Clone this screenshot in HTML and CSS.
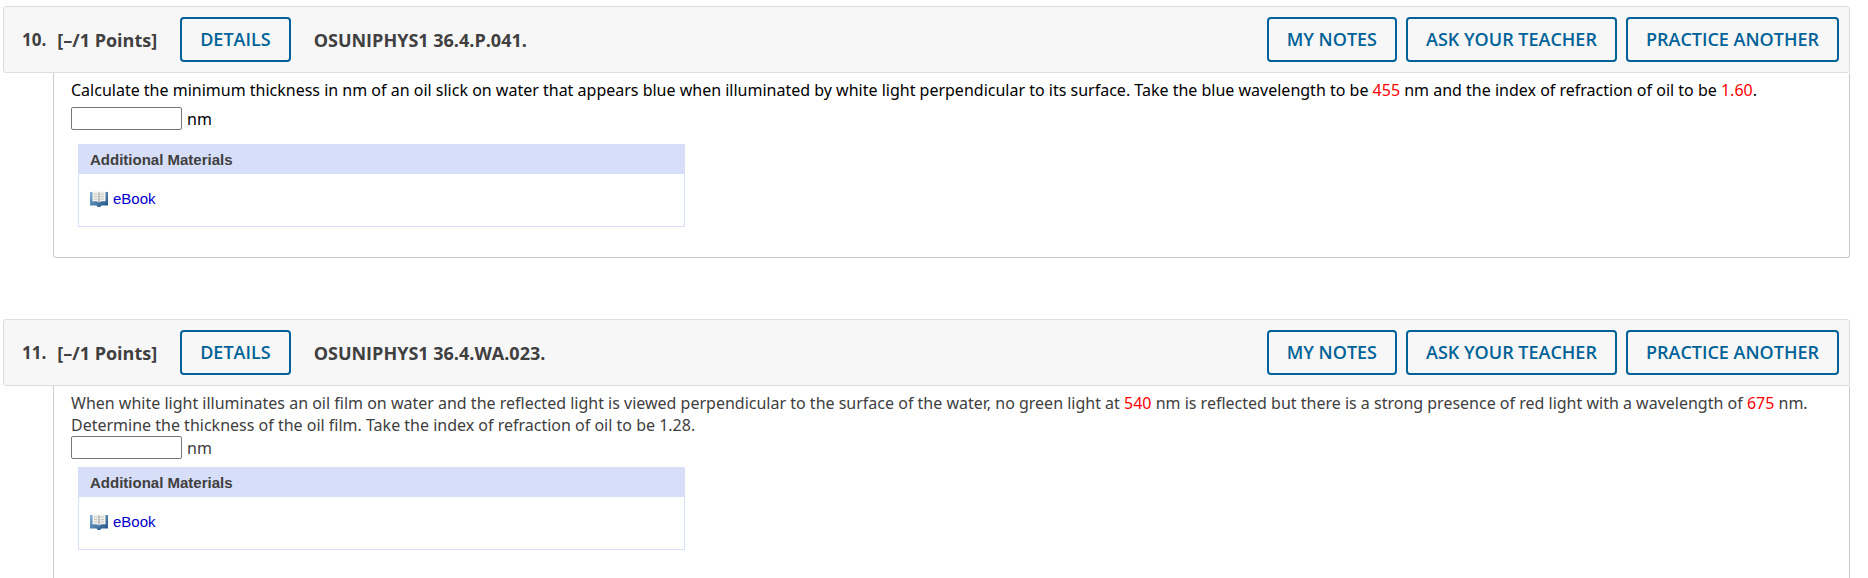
FILE: index.html
```
<!DOCTYPE html>
<html lang="en">
<head>
    <meta charset="UTF-8">
    <meta name="viewport" content="width=device-width, initial-scale=1.0">
    <title>Assignment</title>
    <link rel="stylesheet" href="styles.css">
</head>
<body>
    <!-- book icon, shared by the eBook links -->
    <svg class="sprite" aria-hidden="true">
        <defs>
            <linearGradient id="cover" x1="0" y1="0" x2="1" y2="1">
                <stop offset="0" stop-color="#7fb2dc"/>
                <stop offset="1" stop-color="#1f4f80"/>
            </linearGradient>
        </defs>
        <symbol id="book" viewBox="0 0 18 16">
            <path fill="url(#cover)" d="M0 1h18v13.500h-6.500L10.300 16H7.700l-1.200-1.500H0z"/>
            <path fill="#f3f2ee" d="M2.500.5C5 0 7.500.2 9 1.300c1.500-1.100 4-1.300 6.500-.8v10c-2.500-.4-5-.1-6.500 1.100-1.500-1.200-4-1.500-6.500-1.100z"/>
            <path fill="none" stroke="#c2c0ba" d="M4 3c1.300-.2 2.500 0 3.500.4M4 5.500c1.300-.2 2.500 0 3.500.4M4 8c1.300-.2 2.500 0 3.500.4M14 3c-1.300-.2-2.500 0-3.500.4M14 5.500c-1.300-.2-2.500 0-3.500.4M14 8c-1.300-.2-2.500 0-3.500.4"/>
            <path fill="none" stroke="#8d9298" d="M9 1.300v10.300"/>
        </symbol>
    </svg>

    <section class="question">
        <div class="question-header">
            <span class="number">10.</span>
            <span class="points">[–/1 Points]</span>
            <button class="btn details" type="button">DETAILS</button>
            <span class="code">OSUNIPHYS1 36.4.P.041.</span>
            <div class="actions">
                <button class="btn" type="button">MY NOTES</button>
                <button class="btn" type="button">ASK YOUR TEACHER</button>
                <button class="btn" type="button">PRACTICE ANOTHER</button>
            </div>
        </div>
        <div class="question-body current">
            <div class="text">Calculate the minimum thickness in nm of an oil slick on water that appears blue when illuminated by white light perpendicular to its surface. Take the blue wavelength to be <span class="value">455</span> nm and the index of refraction of oil to be <span class="value">1.60</span>.</div>
            <div class="answer">
                <input id="answer-10" type="text">
                <label for="answer-10">nm</label>
            </div>
            <div class="materials">
                <div class="materials-title">Additional Materials</div>
                <div class="materials-list">
                    <a href="#ebook"><svg class="icon" aria-hidden="true"><use href="#book"/></svg>eBook</a>
                </div>
            </div>
        </div>
    </section>

    <section class="question">
        <div class="question-header">
            <span class="number">11.</span>
            <span class="points">[–/1 Points]</span>
            <button class="btn details" type="button">DETAILS</button>
            <span class="code">OSUNIPHYS1 36.4.WA.023.</span>
            <div class="actions">
                <button class="btn" type="button">MY NOTES</button>
                <button class="btn" type="button">ASK YOUR TEACHER</button>
                <button class="btn" type="button">PRACTICE ANOTHER</button>
            </div>
        </div>
        <div class="question-body">
            <div class="text">When white light illuminates an oil film on water and the reflected light is viewed perpendicular to the surface of the water, no green light at <span class="value">540</span> nm is reflected but there is a strong presence of red light with a wavelength of <span class="value">675</span> nm. Determine the thickness of the oil film. Take the index of refraction of oil to be 1.28.</div>
            <div class="answer">
                <input id="answer-11" type="text">
                <label for="answer-11">nm</label>
            </div>
            <div class="materials">
                <div class="materials-title">Additional Materials</div>
                <div class="materials-list">
                    <a href="#ebook"><svg class="icon" aria-hidden="true"><use href="#book"/></svg>eBook</a>
                </div>
            </div>
        </div>
    </section>
</body>
</html>
```
FILE: styles.css
```
* {
    box-sizing: border-box;
}

body {
    margin: 0;
    padding: 6px 18px 0 3px;
    background-color: #fff;
    color: #404040;
    font-family: "Noto Sans", Verdana, sans-serif;
    font-size: 16px;
    line-height: 22px;
}

.sprite {
    position: absolute;
    width: 0;
    height: 0;
}

.question + .question {
    margin-top: 61px;
}

.question-header {
    display: flex;
    align-items: center;
    padding: 10px 10px 10px 18px;
    border: 1px solid #ddd;
    border-radius: 3px;
    background-color: #f7f7f7;
    font-family: "Open Sans", sans-serif;
    font-size: 18px;
    font-weight: bold;
}

.number {
    font-size: 17px;
}

.points {
    margin-left: 11px;
}

.details {
    margin: 0 23px;
}

.actions {
    display: flex;
    gap: 9px;
    margin-left: auto;
}

.btn {
    height: 45px;
    padding: 0 18px 1px;
    border: 2px solid #006298;
    border-radius: 4px;
    background-color: transparent;
    color: #006298;
    font-family: "Open Sans", sans-serif;
    font-size: 18px;
    font-weight: 600;
    cursor: pointer;
}

.question-body {
    margin-left: 50px;
    padding: 6px 16px 30px 17px;
    border: 1px solid #ccc;
    border-top: none;
    border-radius: 0 0 3px 3px;
}

.current .text,
.current .answer {
    color: #000;
}

.current .answer {
    margin: 6px 0 14px;
}

.value {
    color: red;
}

.answer {
    display: flex;
    align-items: center;
    gap: 5px;
    margin-bottom: 8px;
}

.answer input {
    width: 111px;
    height: 23px;
    border: 1px solid #767676;
    border-radius: 2px;
}

.materials {
    max-width: 607px;
    margin-left: 7px;
    border: 1px solid #d7def8;
    font-family: Arial, "Liberation Sans", sans-serif;
    font-size: 15px;
}

.materials-title {
    padding: 4px 11px 3px;
    background-color: #d7def8;
    font-weight: bold;
}

.materials-list {
    display: flex;
    padding: 14px 11px 16px;
}

.materials-list a {
    display: flex;
    align-items: center;
    gap: 5px;
    color: #0000cc;
    text-decoration: none;
}

.icon {
    width: 18px;
    height: 16px;
}
```
